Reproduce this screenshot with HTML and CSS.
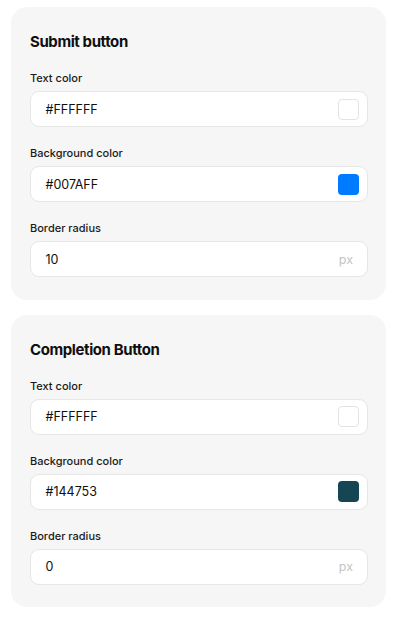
FILE: index.html
```html
<!DOCTYPE html>
<html>
<head>
<meta charset="utf-8">
<link rel="stylesheet" href="styles.css">
</head>
<body>
<div class="page">
  <section class="card">
    <h2 class="card-title">Submit button</h2>
    <div class="field">
      <label class="field-label">Text color</label>
      <div class="input">
        <span class="input-value">#FFFFFF</span>
        <span class="swatch swatch-white"></span>
      </div>
    </div>
    <div class="field">
      <label class="field-label">Background color</label>
      <div class="input">
        <span class="input-value">#007AFF</span>
        <span class="swatch swatch-blue"></span>
      </div>
    </div>
    <div class="field">
      <label class="field-label">Border radius</label>
      <div class="input">
        <span class="input-value">10</span>
        <span class="unit">px</span>
      </div>
    </div>
  </section>
  <section class="card">
    <h2 class="card-title">Completion Button</h2>
    <div class="field">
      <label class="field-label">Text color</label>
      <div class="input">
        <span class="input-value">#FFFFFF</span>
        <span class="swatch swatch-white"></span>
      </div>
    </div>
    <div class="field">
      <label class="field-label">Background color</label>
      <div class="input">
        <span class="input-value">#144753</span>
        <span class="swatch swatch-teal"></span>
      </div>
    </div>
    <div class="field">
      <label class="field-label">Border radius</label>
      <div class="input">
        <span class="input-value">0</span>
        <span class="unit">px</span>
      </div>
    </div>
  </section>
</div>
</body>
</html>
```
FILE: styles.css
```css
* { box-sizing: border-box; }
html, body { margin: 0; padding: 0; background: #ffffff; }
body { font-family: Inter, "Noto Sans", sans-serif; color: #111111; }
.page {
  padding: 7px 13px 0 11px;
  display: flex;
  flex-direction: column;
  gap: 15px;
}
.card {
  background: #f6f6f6;
  border-radius: 16px;
  padding: 25px 18.5px 22.5px 18.5px;
  display: flex;
  flex-direction: column;
  gap: 19px;
}
.card-title {
  margin: 0;
  font-size: 15px;
  font-weight: 700;
  line-height: 20px;
  padding-left: 0.5px;
  letter-spacing: -0.4px;
  color: #0f0f0f;
}
.field {
  display: flex;
  flex-direction: column;
  gap: 6px;
}
.field-label {
  font-size: 11px;
  font-weight: 500;
  line-height: 14px;
  padding-left: 0.5px;
  color: #1a1a1a;
}
.input {
  height: 36px;
  background: #ffffff;
  border: 1px solid #e6e6e6;
  border-radius: 9px;
  display: flex;
  align-items: center;
  justify-content: space-between;
  padding: 0 7.5px 0 15px;
}
.input-value {
  font-size: 12.5px;
  font-weight: 400;
  color: #0f0f0f;
}
.swatch {
  width: 21px;
  height: 21px;
  border-radius: 4px;
}
.swatch-white { background: #ffffff; border: 1px solid #e3e3e3; }
.swatch-blue { background: #007aff; }
.swatch-teal { background: #144753; }
.unit {
  font-size: 12.5px;
  color: #c4c4c4;
  padding-right: 6px;
}
```
